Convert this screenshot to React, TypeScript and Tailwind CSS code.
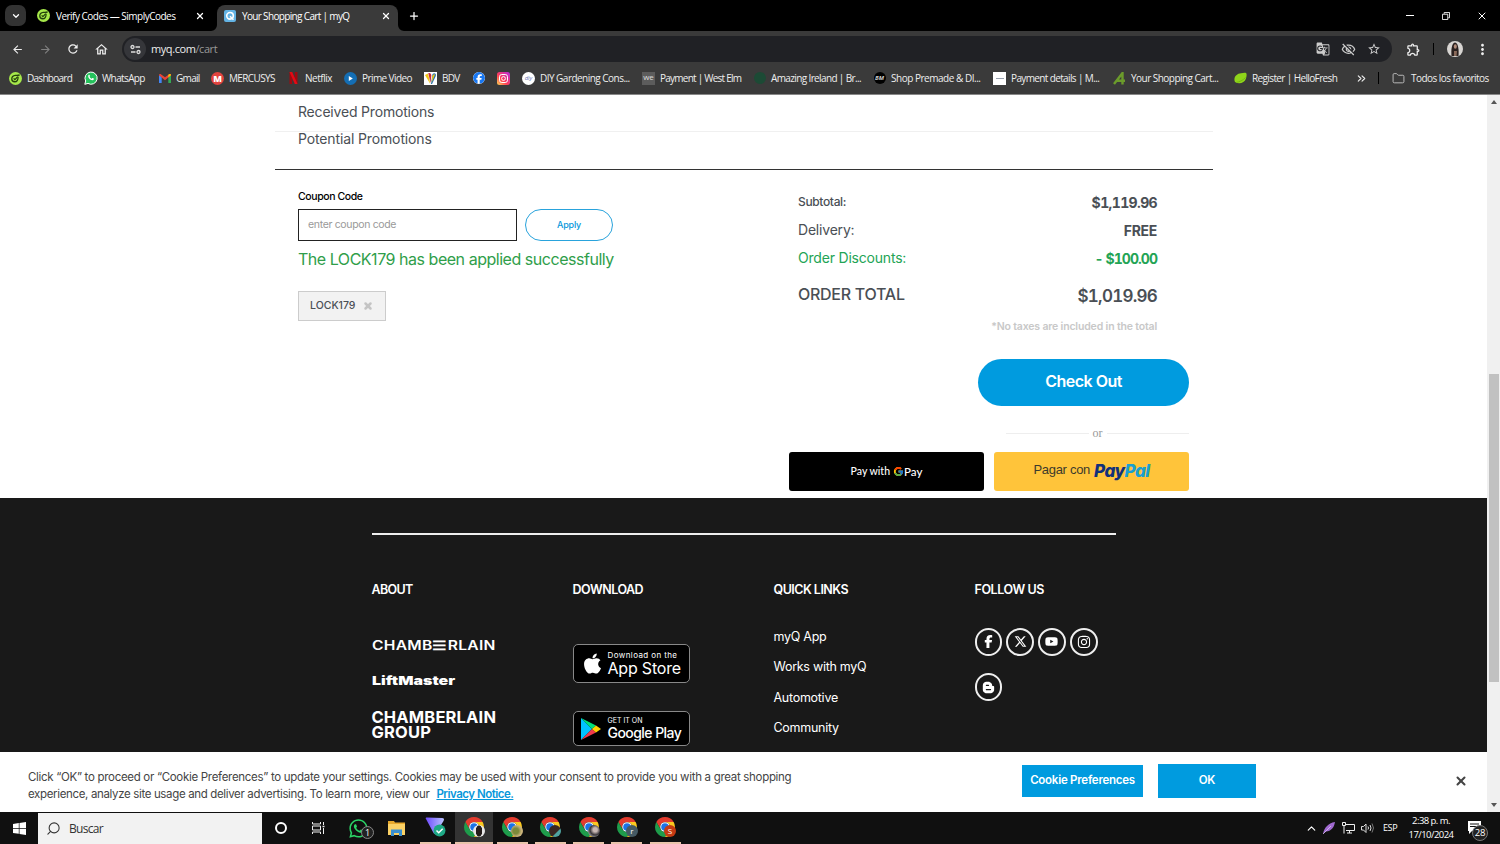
import React from 'react';
import {
  MdArrowBack,
  MdArrowForward,
  MdGTranslate,
  MdMoreVert,
  MdOutlineExtension,
  MdOutlineHome,
  MdOutlineVisibilityOff,
  MdRefresh,
  MdStarBorder,
} from 'react-icons/md';
import { FaApple, FaBloggerB, FaFacebook, FaFacebookF, FaInstagram, FaWhatsapp, FaXTwitter, FaYoutube } from 'react-icons/fa6';
import { FcGoogle } from 'react-icons/fc';
import { ChevronDown, ChevronUp, ChevronsRight, Folder, Plus, Search, X } from 'lucide-react';

const LeafIcon = () => (
  <svg viewBox="0 0 14 14" className="size-[13px] shrink-0">
    <circle cx="7" cy="7" r="7" fill="#a6e84a" />
    <path d="M11.500 3C9.500 3.800 8.500 3.500 6.800 3.700 4.500 4 3 5.500 3 7.500c0 1.800 1.400 3 3.200 3C8.700 10.500 9.800 7.500 9.800 5" fill="none" stroke="#24420c" strokeWidth="1.400" />
    <path d="m5 6.800 1.400 1.500 3-3.300" fill="none" stroke="#24420c" strokeWidth="1.300" />
  </svg>
);

const WhatsAppIcon = () => (
  <svg viewBox="0 0 14 14" className="size-[14px] shrink-0">
    <path d="M.8 13.3 1.7 10A6.1 6.1 0 1 1 4 12.4Z" fill="#25c25c" stroke="#fff" strokeWidth="1" />
    <path d="M4.4 4.2c.6-.8 1.2-.4 1.5.5.2.5-.4.8-.3 1.1.4.9 1.1 1.5 2 1.9.5.1.7-.8 1.3-.6 1.3.6 1.3.8.7 1.6-2 1.8-6.4-2.1-5.2-4.5Z" fill="#fff" />
  </svg>
);

const GmailIcon = () => (
  <svg viewBox="0 0 12 9" className="w-3 h-[9px] shrink-0">
    <path d="M0 1v8h2.7V3Z" fill="#4285f4" />
    <path d="M12 1v8H9.3V3Z" fill="#34a853" />
    <path d="M0 1.2C0 0 1.3-.3 2.2.4L6 3.3 9.800.4C10.700-.3 12 0 12 1.200L6 6.300Z" fill="#ea4335" />
    <path d="M9.300 3.500V.8C10.300-.3 12 0 12 1.200Z" fill="#fbbc04" />
  </svg>
);

const MercusysIcon = () => (
  <span className="size-[13px] rounded-full bg-[#e2433f] text-white text-[9px] leading-[13px] text-center font-extrabold">M</span>
);

const NetflixIcon = () => (
  <svg viewBox="0 0 9 12" className="w-[9px] h-3 shrink-0">
    <path d="M.5 0h2.700v12H.5ZM5.800 0h2.700v12H5.800Z" fill="#9c0a10" />
    <path d="M.5 0h2.700l5.300 12H5.800Z" fill="#e50914" />
  </svg>
);

const PrimeIcon = () => (
  <svg viewBox="0 0 13 13" className="size-[13px] shrink-0">
    <circle cx="6.500" cy="6.500" r="6.500" fill="#146eb4" />
    <path d="M4.800 4v5l4-2.500Z" fill="#fff" />
  </svg>
);

const BdvIcon = () => (
  <svg viewBox="0 0 13 13" className="size-[13px] shrink-0">
    <rect width="13" height="13" fill="#fff" />
    <path d="M1 3 4 1.500 6.300 12Z" fill="#f2c514" />
    <path d="M4.300 1C6.500.5 7.500 2 7.300 4L6.500 11Z" fill="#c5283d" />
    <path d="M8.500 2C10.500.5 12.500 1.500 11.800 4L8 12H7Z" fill="#1f6fb5" />
    <path d="M8.300 4.500C9 2.500 10 2 11 2.500L7.500 11Z" fill="#f2c514" />
  </svg>
);

const InstagramIcon = () => (
  <svg viewBox="0 0 13 13" className="size-[13px] shrink-0">
    <defs>
      <linearGradient id="insta" x1="0" y1="1" x2="1" y2="0">
        <stop offset="0" stopColor="#fd5" />
        <stop offset=".4" stopColor="#ff3d54" />
        <stop offset="1" stopColor="#b82be0" />
      </linearGradient>
    </defs>
    <rect width="13" height="13" rx="2.500" fill="url(#insta)" />
    <rect x="2.500" y="2.500" width="8" height="8" rx="2.300" fill="none" stroke="#fff" />
    <circle cx="6.500" cy="6.500" r="1.900" fill="none" stroke="#fff" />
  </svg>
);

const HelloFreshIcon = () => (
  <svg viewBox="0 0 13 12" className="w-[13px] h-3 shrink-0">
    <path d="M1 10C-1 5.500 2.500 1.500 7 1.200c2-.1 4-.7 5.300 0 .8 2 0 4-.4 5.500C10.500 11 5 12.500 1 10Z" fill="#8fd41a" />
    <path d="M2 10.500C5 10 9 8.500 11.500 5.500" fill="none" stroke="#74b814" strokeWidth="1" />
  </svg>
);

const bookmarks = [
  { width: 'w-[75px]', tracking: 'tracking-[-0.72px]', label: 'Dashboard', icon: <LeafIcon /> },
  { width: 'w-[74px]', tracking: 'tracking-[-0.62px]', label: 'WhatsApp', icon: <WhatsAppIcon /> },
  { width: 'w-[53px]', tracking: 'tracking-[-0.7px]', label: 'Gmail', icon: <GmailIcon /> },
  { width: 'w-[76px]', tracking: 'tracking-[-0.62px]', label: 'MERCUSYS', icon: <MercusysIcon /> },
  { width: 'w-[57px]', tracking: 'tracking-[-0.48px]', label: 'Netflix', icon: <NetflixIcon /> },
  { width: 'w-[80px]', tracking: 'tracking-[-0.58px]', label: 'Prime Video', icon: <PrimeIcon /> },
  { width: 'w-[48px]', tracking: 'tracking-[-0.7px]', label: 'BDV', icon: <BdvIcon /> },
  { width: 'w-[25px]', tracking: '', label: '', icon: <FaFacebook size={12} className="text-[#1877f2] bg-white rounded-full" /> },
  { width: 'w-[25px]', tracking: '', label: '', icon: <InstagramIcon /> },
  {
    width: 'w-[120px]',
    tracking: 'tracking-[-0.53px]',
    label: 'DIY Gardening Cons...',
    icon: <span className="size-[13px] rounded-full bg-white text-[#6a78b8] text-[6px] leading-[12px] italic text-center">diy</span>,
  },
  {
    width: 'w-[111px]',
    tracking: 'tracking-[-0.76px]',
    label: 'Payment | West Elm',
    icon: <span className="size-[13px] bg-[#5c5c5c] text-[#ddd] text-[8px] leading-[10px] text-center">we</span>,
  },
  { width: 'w-[120px]', tracking: 'tracking-[-0.63px]', label: 'Amazing Ireland | Br...', icon: <span className="size-3 rounded-full bg-[#1c4a35]" /> },
  {
    width: 'w-[120px]',
    tracking: 'tracking-[-0.48px]',
    label: 'Shop Premade & DI...',
    icon: <span className="size-3 rounded-full bg-black text-[#ccc] text-[6px] leading-3 italic font-bold text-center">BM</span>,
  },
  {
    width: 'w-[120px]',
    tracking: 'tracking-[-0.63px]',
    label: 'Payment details | M...',
    icon: (
      <span className="size-[13px] bg-white flex flex-col justify-center items-center">
        <span className="w-2 h-px bg-gray-400" />
      </span>
    ),
  },
  {
    width: 'w-[121px]',
    tracking: 'tracking-[-0.53px]',
    label: 'Your Shopping Cart...',
    icon: (
      <svg viewBox="0 0 13 13" className="size-[13px] shrink-0">
        <path d="M1 12 9.500 1v11.500M4 8.800h8" fill="none" stroke="#6b9b2b" strokeWidth="2.400" />
      </svg>
    ),
  },
  { width: 'w-[115px]', tracking: 'tracking-[-0.62px]', label: 'Register | HelloFresh', icon: <HelloFreshIcon /> },
];

const TabBar = () => (
  <div className="h-[31px] bg-black flex items-center shrink-0 text-white">
    <div className="ml-[5px] size-[21px] rounded-[7px] bg-[#333] flex items-center justify-center">
      <ChevronDown size={10} strokeWidth={3} />
    </div>
    <div className="w-[191px] h-full flex items-center pl-[11px]">
      <LeafIcon />
      <span className="ml-[6px] w-[139px] pt-px text-[10px] tracking-[-0.52px] whitespace-nowrap">Verify Codes — SimplyCodes</span>
      <X size={10} strokeWidth={3} />
    </div>
    <div className="relative w-[181px] h-[26px] self-end rounded-t-[8px] bg-[#3a3a3a] flex items-center pl-[7px] pb-[4px]">
      <svg viewBox="0 0 6 6" className="absolute -left-[6px] bottom-0 size-[6px]">
        <path d="M6 0v6H0a6 6 0 0 0 6-6Z" fill="#3a3a3a" />
      </svg>
      <svg viewBox="0 0 6 6" className="absolute -right-[6px] bottom-0 size-[6px]">
        <path d="M0 0v6h6a6 6 0 0 1-6-6Z" fill="#3a3a3a" />
      </svg>
      <svg viewBox="0 0 12 12" className="size-[12px]">
        <rect width="12" height="12" rx="2" fill="#63b3e4" />
        <circle cx="6" cy="5.800" r="3.300" fill="none" stroke="#fff" strokeWidth="1.600" />
        <path d="m6 6.300 3.500 3.500" stroke="#fff" strokeWidth="1.600" />
      </svg>
      <span className="ml-[6px] w-[139px] text-[10px] tracking-[-0.66px] whitespace-nowrap">Your Shopping Cart | myQ</span>
      <X size={10} strokeWidth={3} />
    </div>
    <Plus size={12} strokeWidth={2.5} className="ml-[10px]" />
    <div className="ml-auto flex items-center gap-[28px] mr-[12px]">
      <span className="w-[8px] h-px bg-white" />
      <svg viewBox="0 0 9 9" className="size-[8px]" fill="none" stroke="#fff">
        <path d="M.5 2.500h6v6h-6ZM2.500 2V.5h6v6H7" />
      </svg>
      <X size={12} strokeWidth={2} className="-ml-[2px]" />
    </div>
  </div>
);

const Toolbar = () => (
  <div className="h-[36px] bg-[#3a3a3a] flex items-center shrink-0 text-[#eee]">
    <MdArrowBack size={13} className="ml-[11px]" />
    <MdArrowForward size={13} className="ml-[15px] text-[#808080]" />
    <MdRefresh size={14} className="ml-[14px]" />
    <MdOutlineHome size={15} className="ml-[14px]" />
    <div className="ml-[13px] w-[1270px] h-[26px] rounded-full bg-[#202125] flex items-center">
      <div className="ml-[2px] size-[22px] rounded-full bg-[#35363a] flex items-center justify-center">
        <svg viewBox="0 0 11 11" className="size-[11px]" fill="none" stroke="#ddd" strokeWidth="1.300">
          <circle cx="2.500" cy="3" r="1.500" />
          <path d="M5.500 3H10M1 8h4.500" />
          <circle cx="8.500" cy="8" r="1.500" />
        </svg>
      </div>
      <span className="ml-[5px] pt-px text-[11px] tracking-[-0.42px] text-[#eee]">
        myq.com<span className="text-[#999]">/cart</span>
      </span>
      <div className="ml-auto mr-[11px] flex items-center gap-[11px] text-[#ccc]">
        <MdGTranslate size={14} />
        <MdOutlineVisibilityOff size={15} />
        <MdStarBorder size={14} />
      </div>
    </div>
    <MdOutlineExtension size={15} className="ml-[14px]" />
    <span className="ml-[12px] w-px h-3 bg-black" />
    <svg viewBox="0 0 16 16" className="ml-[13px] size-4">
      <circle cx="8" cy="8" r="8" fill="#d8d5d2" />
      <path d="M4.500 15C4 10 4.500 1.500 8 1.500S12 10 11.500 15Z" fill="#2b211f" />
      <ellipse cx="8.300" cy="5.500" rx="1.500" ry="2.200" fill="#b08a78" />
      <path d="M7 10h3l-.5 5H7Z" fill="#8a6a5a" />
    </svg>
    <MdMoreVert size={17} className="ml-[11px]" />
  </div>
);

const BookmarksBar = () => (
  <div className="h-[28px] pb-[5px] bg-[#3a3a3a] flex items-center pl-[9px] shrink-0 text-[#eee] text-[10px] whitespace-nowrap border-b border-[#888]">
    {bookmarks.map((item, i) => (
      <div key={i} className={`${item.width} flex items-center gap-[5px] shrink-0`}>
        <span className="w-[13px] flex items-center justify-center shrink-0">{item.icon}</span>
        <span className={item.tracking}>{item.label}</span>
      </div>
    ))}
    <ChevronsRight size={13} strokeWidth={2} className="ml-[6px] shrink-0" />
    <span className="ml-[10px] w-px h-3 bg-black shrink-0" />
    <Folder size={13} strokeWidth={1.8} className="ml-[13px] mr-[6px] text-[#bbb] shrink-0" />
    <span className="tracking-[-0.53px]">Todos los favoritos</span>
  </div>
);

const CartSummary = () => (
  <main className="h-[403px] bg-white text-[#4a4f55]">
    <div className="w-[938px] ml-[275px]">
      <div className="h-[37px] border-b border-[#f0f0f0] pl-[23px] pt-[7px] text-[14px] leading-[20px] tracking-[-0.19px]">Received Promotions</div>
      <div className="h-[38px] border-b border-[#333] pl-[23px] text-[14px] leading-[14px] tracking-[-0.13px]">Potential Promotions</div>
      <div className="flex">
        <section className="w-[491px] pl-[23px] pt-[20px]">
          <label className="block text-[10.5px] leading-[14px] font-medium tracking-[-0.4px] text-black">Coupon Code</label>
          <div className="flex gap-2 mt-[5px]">
            <input
              placeholder="enter coupon code"
              className="w-[219px] h-[32px] border border-[#222] px-[9px] pb-px text-[10.5px] tracking-[-0.34px] placeholder:text-[#999]"
            />
            <button className="w-[88px] h-[32px] pb-px rounded-full border border-[#29a3dc] text-[#0797db] text-[9px] tracking-[-0.2px] font-medium">Apply</button>
          </div>
          <p className="mt-[7px] text-[16px] leading-[22px] tracking-[-0.47px] text-[#2f9e4a] whitespace-nowrap">The LOCK179 has been applied successfully</p>
          <span className="mt-[21px] w-[88px] h-[30px] border border-[#ccc] bg-[#f2f2f2] flex items-center pl-[11px] gap-[8px] text-[10.5px] font-medium">
            <span className="pb-px">LOCK179</span>
            <X size={10} strokeWidth={6} className="text-[#c4c4c4]" />
          </span>
        </section>
        <section className="w-[447px] pt-[18px]">
          <div className="pl-[32px] pr-[56px]">
            <div className="h-[28px] flex justify-between items-center">
              <span className="text-[12px] tracking-[-0.35px] font-medium">Subtotal:</span>
              <span className="text-[14px] tabular-nums tracking-[-0.62px] font-bold">$1,119.96</span>
            </div>
            <div className="h-[28px] flex justify-between items-center text-[14px]">
              <span className="pb-px tracking-[-0.2px]">Delivery:</span>
              <span className="tracking-[-0.3px] font-bold">FREE</span>
            </div>
            <div className="h-[28px] flex justify-between items-center text-[14px] text-[#23a455]">
              <span className="pb-px tracking-[-0.2px]">Order Discounts:</span>
              <span className="tabular-nums tracking-[-0.95px] font-bold">- $100.00</span>
            </div>
            <div className="h-[47px] flex justify-between items-center">
              <span className="pb-[3px] text-[16px] tracking-[-0.27px] font-medium">ORDER TOTAL</span>
              <span className="pt-[2px] text-[17px] tabular-nums tracking-[-0.75px] font-semibold">$1,019.96</span>
            </div>
            <p className="text-right text-[10.5px] leading-[16px] tracking-[-0.16px] font-semibold text-[#c8c8c8]">*No taxes are included in the total</p>
          </div>
          <button className="block ml-[212px] mt-[24px] w-[211px] h-[47px] pb-[3px] rounded-full bg-[#009bdf] text-white text-[16px] tracking-[-0.5px] font-semibold">Check Out</button>
          <div className="ml-[240px] mt-[19px] w-[183px] h-[16px] flex items-center gap-[4px] text-[12px] text-[#999] font-['Liberation_Serif',serif]">
            <span className="flex-1 h-px bg-[#eee]" />
            or
            <span className="flex-1 h-px bg-[#eee]" />
          </div>
          <div className="ml-[23px] mt-[11px] flex gap-[10px]">
            <button className="w-[195px] h-[39px] rounded-[3px] bg-black text-white flex items-center justify-center text-[10.5px] font-medium font-['Lato',sans-serif]">
              <span className="pt-px">Pay with</span>
              <FcGoogle size={11} className="ml-[3px]" />
              <span className="text-[11.5px]">Pay</span>
            </button>
            <button className="w-[195px] h-[39px] rounded-[3px] bg-[#ffc43a] flex items-center justify-center gap-[4px] text-[13px] text-[#3c3a2c]">
              <span className="pb-[3px] tracking-[-0.3px] font-['Liberation_Sans',sans-serif]">Pagar con</span>
              <span className="text-[17px] tracking-[-0.5px] italic font-extrabold text-[#12307a]">
                Pay<span className="text-[#1a9fd0]">Pal</span>
              </span>
            </button>
          </div>
        </section>
      </div>
    </div>
  </main>
);

const socials = [
  { Icon: FaFacebookF, size: 13 },
  { Icon: FaXTwitter, size: 13 },
  { Icon: FaYoutube, size: 13 },
  { Icon: FaInstagram, size: 14 },
  { Icon: FaBloggerB, size: 13 },
];

const Footer = () => (
  <footer className="h-[254px] bg-[#191919] text-white overflow-hidden">
    <div className="ml-[371.5px] w-[744px] pt-[35px]">
      <div className="h-[2px] bg-[#eee]" />
      <div className="flex pt-[45px]">
        <div className="w-[201px]">
          <h3 className="text-[12.5px] leading-[20px] font-semibold tracking-[-0.65px]">ABOUT</h3>
          <div className="mt-[38px] h-[16px] w-[102px] origin-left scale-x-[1.25] text-[12.5px] leading-[16px] font-semibold tracking-[0.2px] whitespace-nowrap">CHAMB☰RLAIN</div>
          <div className="mt-[18px] h-[16px] w-[62px] origin-left scale-x-[1.33] text-[12px] leading-[17px] font-black whitespace-nowrap">LiftMaster</div>
          <div className="mt-[22px] text-[16.5px] leading-[15px] font-bold tracking-[0.16px]">
            <div className="h-[15px]">CHAMBERLAIN</div>
            <div className="h-[15px]">GROUP</div>
          </div>
        </div>
        <div className="w-[201px]">
          <h3 className="text-[12.5px] leading-[20px] font-semibold tracking-[-0.5px]">DOWNLOAD</h3>
          <div className="mt-[44px] w-[117px] h-[39px] rounded-[5px] border border-[#888] bg-black flex items-center pl-[7px] gap-[4px]">
            <FaApple size={23} className="shrink-0" />
            <div className="whitespace-nowrap">
              <div className="text-[8px] leading-[9px] tracking-[0.4px]">Download on the</div>
              <div className="text-[16px] leading-[16px] tracking-[-0.2px]">App Store</div>
            </div>
          </div>
          <div className="mt-[28px] w-[117px] h-[35px] rounded-[5px] border border-[#888] bg-black flex items-center pl-[7px] gap-[7px]">
            <svg viewBox="0 0 20 22" className="w-5 h-[22px] shrink-0">
              <path d="M0 0v22L11 11Z" fill="#00c3ff" />
              <path d="M0 0 15 7.500 11 11Z" fill="#00e07a" />
              <path d="M0 22 15 14.500 11 11Z" fill="#f03a4a" />
              <path d="M15 7.500 20 11l-5 3.500L11 11Z" fill="#ffd000" />
            </svg>
            <div className="whitespace-nowrap">
              <div className="text-[7px] leading-[9px]">GET IT ON</div>
              <div className="text-[14px] leading-[16px] tracking-[-0.55px] font-medium">Google Play</div>
            </div>
          </div>
        </div>
        <div className="w-[201px]">
          <h3 className="text-[12.5px] leading-[20px] font-semibold tracking-[-0.52px]">QUICK LINKS</h3>
          <ul className="mt-[21.5px] text-[12.5px] leading-[30.5px] tracking-[-0.27px]">
            <li>myQ App</li>
            <li>Works with myQ</li>
            <li>Automotive</li>
            <li>Community</li>
          </ul>
        </div>
        <div className="w-[141px]">
          <h3 className="text-[12.5px] leading-[20px] font-semibold tracking-[-0.45px]">FOLLOW US</h3>
          <div className="mt-[28px] flex flex-wrap gap-x-[4px] gap-y-[17.500px]">
            {socials.map(({ Icon, size }, i) => (
              <span key={i} className="size-[27.800px] rounded-full border-2 border-[#eee] flex items-center justify-center">
                <Icon size={size} />
              </span>
            ))}
          </div>
        </div>
      </div>
    </div>
  </footer>
);

const CookieBanner = () => (
  <div className="h-[60px] bg-white flex items-center text-[#444] shrink-0">
    <p className="ml-[28px] w-[994px] text-[11.5px] leading-[17px] tracking-[-0.305px] pt-[8px] whitespace-nowrap">
      Click “OK” to proceed or “Cookie Preferences” to update your settings. Cookies may be used with your consent to provide you with a great shopping
      <br />
      <span className="tracking-[-0.35px]">experience, analyze site usage and deliver advertising. To learn more, view our </span>
      <a className="ml-[4px] text-[#0797db] font-semibold tracking-[-0.5px] underline">Privacy Notice.</a>
    </p>
    <button className="mb-[2px] w-[121px] h-[32px] bg-[#009bdf] text-white text-[11.5px] tracking-[-0.25px] font-semibold whitespace-nowrap">Cookie Preferences</button>
    <button className="mb-[2px] ml-[15px] w-[98px] h-[34px] bg-[#009bdf] text-white text-[11.5px] tracking-[-0.25px] font-semibold">OK</button>
    <X size={14} strokeWidth={3.5} className="ml-[198px] mb-[2px]" />
  </div>
);

const ChromeIcon = ({ badge, text }: { badge: string; text?: string }) => (
  <div className="relative size-[20px]">
    <svg viewBox="0 0 20 20" className="size-[20px]">
      <path d="M1.340 5A10 10 0 0 1 18.660 5H10a5 5 0 0 0-4.330 7.500Z" fill="#e33b2e" />
      <path d="M1.340 5A10 10 0 0 0 10 20l4.330-7.500a5 5 0 0 1-8.660 0Z" fill="#1e9c4b" />
      <path d="M18.660 5A10 10 0 0 1 10 20l4.330-7.500A5 5 0 0 0 10 5Z" fill="#fcc91f" />
      <circle cx="10" cy="10" r="4.800" fill="#fff" />
      <circle cx="10" cy="10" r="3.800" fill="#1a73e8" />
    </svg>
    <span className={`absolute left-[9px] top-[8px] size-[12px] rounded-full ${badge} text-white text-[8px] leading-[11px] text-center`}>{text}</span>
  </div>
);

const chromeWindows = [
  { badge: 'bg-[radial-gradient(ellipse_3.5px_6px_at_center,#241c1a_85%,#e8e8e8_100%)]', active: true },
  { badge: 'bg-[radial-gradient(circle_at_40%_50%,#7c8a3a_30%,#c9b27a_60%)]' },
  { badge: 'bg-[linear-gradient(135deg,#3a2622_60%,#4fa3a0_65%)]' },
  { badge: 'bg-[radial-gradient(circle_at_60%_40%,#c8b8b4_20%,#39363a_50%,#bfbfbf_85%)]' },
  { badge: 'bg-[#455a64]', text: 'r' },
  { badge: 'bg-[#c53a12]', text: 'S' },
];

const Taskbar = () => (
  <div className="h-[32px] bg-[#101010] flex items-center shrink-0 text-white font-['Open_Sans',sans-serif]">
    <div className="w-[38px] flex justify-center">
      <svg viewBox="0 0 13 13" className="size-[13px]" fill="#fff">
        <path d="M0 2 5.800 1.100V6H0ZM6.500 1 13 0v6H6.500ZM0 6.800h5.800v5L0 11ZM6.500 6.800H13V13l-6.500-1Z" />
      </svg>
    </div>
    <div className="w-[224px] h-[31px] bg-[#f2f2f2] flex items-center text-[#333] text-[12px]">
      <Search size={15} strokeWidth={1.7} className="ml-[8px] mr-[8px] -scale-x-100" />
      <span className="pt-px tracking-[-0.7px]">Buscar</span>
    </div>
    <span className="ml-[13px] size-[12px] rounded-full border-2 border-white" />
    <svg viewBox="0 0 13 12" className="ml-[25px] w-[13px] h-3" fill="none" stroke="#eee">
      <path d="M.5 0v2h8V0M.5 12v-2h8v2M.5 4h8v4h-8ZM11.500 0v3M11.500 6v6" />
      <path d="M10.500 4.500h2" strokeWidth="1.500" />
    </svg>
    <div className="relative ml-[23px] w-[26px]">
      <FaWhatsapp size={21} className="text-[#2bd366]" />
      <span className="absolute left-[13px] top-[8px] size-[13px] rounded-full border border-[#888] bg-[#222] text-[9px] leading-[11px] text-center">1</span>
    </div>
    <svg viewBox="0 0 17 15" className="ml-[14px] w-[17px] h-[15px]">
      <path d="M0 0h6l1 1.500h10V14H0Z" fill="#e8a92c" />
      <path d="M0 3h17v11H0Z" fill="#fbd165" />
      <path d="M3 15V8.500h11V15h-3v-3H6v3Z" fill="#3a8fcf" />
    </svg>
    <div className="ml-[15px] w-[31px] h-full flex items-center justify-center border-b-2 border-[#e9c4ab]">
      <svg viewBox="0 0 21 20" className="w-[21px] h-5">
        <defs>
          <linearGradient id="vpn" x1="0" y1="0" x2="1" y2="0">
            <stop offset="0" stopColor="#6d4aff" />
            <stop offset="1" stopColor="#b9c3ff" />
          </linearGradient>
        </defs>
        <path d="M1 2C0 1 1 .5 2 .5L17 1c2 .1 2.500 1 1.500 3L11 16c-1 1.500-2 1-3-1Z" fill="url(#vpn)" />
        <circle cx="14.500" cy="13.500" r="6" fill="#1ea885" />
        <path d="m11.500 13.500 2.200 2.200 4-4" fill="none" stroke="#fff" strokeWidth="1.500" />
      </svg>
    </div>
    <div className="ml-[4px] flex h-full">
      {chromeWindows.map((item, i) => (
        <div key={i} className={`w-[38.200px] h-full flex justify-center ${item.active ? 'bg-[#333]' : ''}`}>
          <div className={`${item.active ? 'w-full' : 'w-[31px]'} h-full flex items-center justify-center border-b-2 border-[#e9c4ab]`}>
            <ChromeIcon badge={item.badge} text={item.text} />
          </div>
        </div>
      ))}
    </div>
    <div className="ml-auto mr-[4px] flex items-center">
      <ChevronUp size={13} strokeWidth={2.2} />
      <svg viewBox="0 0 12 12" className="ml-[5px] size-3">
        <path d="M0 12C1 6 5 1 12 0c-1 6-4 9-9 9.500Z" fill="#a06ad0" />
        <path d="m0 12 8-8" stroke="#e0c8f5" strokeWidth=".7" />
      </svg>
      <svg viewBox="0 0 13 12" className="ml-[7px] w-[13px] h-3" fill="none" stroke="#eee">
        <path d="M4 2.500h8.500v6H4M.5.500h3v3h-3ZM2 3.500v8M5 11h5M7.500 8.500V11" />
      </svg>
      <svg viewBox="0 0 13 12" className="ml-[6px] w-[13px] h-3" fill="none" stroke="#ddd">
        <path d="M.5 4.500h2l2.500-2.500v8.500L2.500 8h-2ZM7 4.500q1 1.500 0 3M9 3q2 3 0 6" />
        <path d="M11 1.500q3 4.500 0 9" stroke="#777" />
      </svg>
      <span className="ml-[9px] w-[16px] text-[9px] tracking-[-0.4px]">ESP</span>
      <div className="ml-[8px] w-[48px] text-center text-[9.5px] leading-[14px] tracking-[-0.55px] whitespace-nowrap">
        <div>2:38 p. m.</div>
        <div>17/10/2024</div>
      </div>
      <div className="relative ml-[13px] w-[28px] h-[22px]">
        <svg viewBox="0 0 13 13" className="mt-[4px] size-[13px]">
          <path d="M0 0h13v10H4l-3 3v-3H0Z" fill="#fff" />
          <path d="M2 3h9M2 5.500h9" stroke="#111" />
        </svg>
        <span className="absolute left-[4px] top-[8px] size-[16px] rounded-full border border-[#777] bg-[#222] text-[9.5px] leading-[14px] tracking-[-0.3px] text-center">28</span>
      </div>
    </div>
  </div>
);

const Scrollbar = () => (
  <div className="w-[13px] bg-[#f0f0f0] flex flex-col items-center justify-between py-[5px] shrink-0">
    <svg viewBox="0 0 6 4" className="w-[6px] h-1">
      <path d="M3 0 6 4H0Z" fill="#555" />
    </svg>
    <div className="w-[10px] h-[308px] mt-[149px] bg-[#c1c1c1]" />
    <svg viewBox="0 0 6 4" className="w-[6px] h-1">
      <path d="M0 0h6L3 4Z" fill="#555" />
    </svg>
  </div>
);

const App: React.FC = () => {
  return (
    <div className="w-[1500px] h-[844px] flex flex-col overflow-hidden bg-black font-['Inter',sans-serif]">
      <div className="font-['Open_Sans',sans-serif]">
        <TabBar />
        <Toolbar />
        <BookmarksBar />
      </div>
      <div className="flex h-[717px]">
        <div className="flex-1 flex flex-col">
          <CartSummary />
          <Footer />
          <CookieBanner />
        </div>
        <Scrollbar />
      </div>
      <Taskbar />
    </div>
  );
};

export default App;
